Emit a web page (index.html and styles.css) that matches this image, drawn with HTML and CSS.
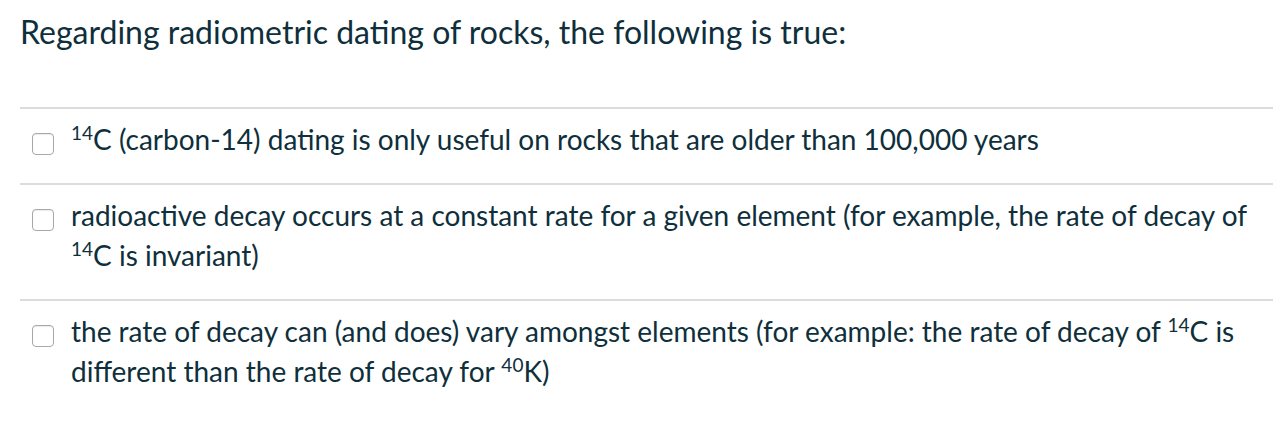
FILE: index.html
```html
<!DOCTYPE html>
<html>
<head>
<meta charset="utf-8">
<link rel="stylesheet" href="styles.css">
</head>
<body>
<div class="question">
  <div class="question-text">Regarding radiometric dating of rocks, the following is true:</div>
  <div class="answers">
    <div class="answer">
      <span class="check"></span>
      <div class="answer-text"><sup>14</sup>C (carbon-14) dating is only useful on rocks that are older than 100,000 years</div>
    </div>
    <div class="answer">
      <span class="check"></span>
      <div class="answer-text">radioactive decay occurs at a constant rate for a given element (for example, the rate of decay of <sup>14</sup>C is invariant)</div>
    </div>
    <div class="answer">
      <span class="check"></span>
      <div class="answer-text">the rate of decay can (and does) vary amongst elements (for example: the rate of decay of <sup>14</sup>C is different than the rate of decay for <sup>40</sup>K)</div>
    </div>
  </div>
</div>
</body>
</html>
```
FILE: styles.css
```css
html, body {
  margin: 0;
  padding: 0;
  background: #ffffff;
}
body {
  font-family: Lato, "Open Sans", sans-serif;
  color: #0e2f3b;
}
.question {
  padding: 0 3px 0 20px;
}
.question-text {
  font-size: 32px;
  line-height: 38px;
  padding-top: 13px;
  padding-bottom: 56px;
}
.answers {
  border-top: 2px solid #dcdcdc;
}
.answer {
  display: flex;
  align-items: flex-start;
  padding: 10px 0 24px 0;
  border-bottom: 2px solid #dcdcdc;
}
.answer:last-child {
  border-bottom: none;
}
.check {
  flex: none;
  width: 20px;
  height: 20px;
  margin: 14px 17px 0 12px;
  border: 1px solid #a8a8a8;
  border-radius: 4px;
  background: #fff;
  box-shadow: inset 0 1px 1px rgba(0,0,0,0.08);
}
.answer-text {
  font-size: 28px;
  line-height: 40px;
}
sup {
  font-size: 19px;
  line-height: 1;
  vertical-align: 10px;
}
```
